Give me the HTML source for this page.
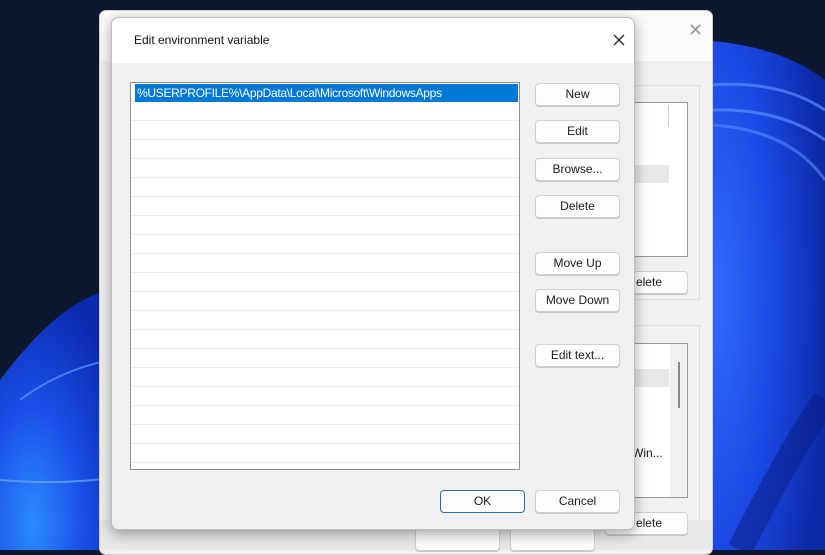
<!DOCTYPE html>
<html><head><style>
*{margin:0;padding:0;box-sizing:border-box}
body{width:825px;height:550px;overflow:hidden;position:relative;background:#0c1830;font-family:"Liberation Sans",sans-serif;font-size:12px;color:#111}
.abs{position:absolute}
.btn{position:absolute;width:85px;height:23px;background:#fdfdfd;border:1px solid #d0d0d0;border-radius:4px;text-align:center;line-height:21px;font-size:12px;color:#1a1a1a;box-shadow:0 1px 0 #c8c8c8}
</style></head><body>
<svg class="abs" style="left:0;top:0" width="825" height="550">
<defs>
<radialGradient id="g1" cx="0.3" cy="0.9" r="0.9"><stop offset="0" stop-color="#2a8cff"/><stop offset="0.5" stop-color="#1b4fe8"/><stop offset="1" stop-color="#0b2ab0"/></radialGradient>
<radialGradient id="g2" cx="0.1" cy="0.5" r="0.9"><stop offset="0" stop-color="#2f6cff"/><stop offset="0.6" stop-color="#1a46e0"/><stop offset="1" stop-color="#0c2aa8"/></radialGradient>
</defs>
<rect width="825" height="550" fill="#0c1830"/>
<path d="M0 380 Q60 300 110 290 L110 550 L0 550Z" fill="url(#g1)"/>
<path d="M20 400 Q60 370 110 360" stroke="#6aa8ff" stroke-width="2" fill="none" opacity=".6"/>
<path d="M0 480 Q60 485 110 478" stroke="#7ab4ff" stroke-width="2" fill="none" opacity=".6"/>
<path d="M700 40 Q780 45 825 80 L825 550 L700 550Z" fill="url(#g2)"/>
<path d="M712 85 Q780 80 825 110" stroke="#5a8bff" stroke-width="3" fill="none" opacity=".7"/>
<path d="M712 110 Q780 108 825 140" stroke="#5a8bff" stroke-width="3" fill="none" opacity=".7"/>
<path d="M712 125 Q790 130 825 180" stroke="#5a8bff" stroke-width="3" fill="none" opacity=".6"/>
<path d="M740 550 Q790 450 825 400" stroke="#0a1a80" stroke-width="25" fill="none" opacity=".5"/>
</svg>
<div class="abs" style="left:99px;top:10px;width:614px;height:545px;background:#f0f0f0;border-radius:7px;border:1px solid #cfcfcf"></div>
<div class="abs" style="left:100px;top:11px;width:612px;height:50px;background:#fbfbfb;border-radius:7px 7px 0 0"></div>
<div class="abs" style="left:688px;top:20px;font-size:18px;color:#999">✕</div>
<div class="abs" style="left:600px;top:85px;width:100px;height:215px;border:1px solid #dcdcdc"></div>
<div class="abs" style="left:600px;top:102px;width:88px;height:155px;background:#fff;border:1px solid #999"></div>
<div class="abs" style="left:600px;top:165px;width:69px;height:18px;background:#e8e8e8"></div>
<div class="abs" style="left:668px;top:105px;width:1px;height:22px;background:#ccc"></div>
<div class="btn" style="left:600px;top:271px;width:88px;text-align:right;padding-right:25px">elete</div>
<div class="abs" style="left:600px;top:325px;width:100px;height:220px;border:1px solid #dcdcdc"></div>
<div class="abs" style="left:600px;top:343px;width:88px;height:155px;background:#fff;border:1px solid #999"></div>
<div class="abs" style="left:600px;top:369px;width:69px;height:18px;background:#e8e8e8"></div>
<div class="abs" style="left:670px;top:344px;width:17px;height:153px;background:#f0f0f0"></div>
<div class="abs" style="left:678px;top:362px;width:2px;height:46px;background:#888"></div>
<div class="abs" style="left:632px;top:446px">Win...</div>
<div class="abs" style="left:100px;top:520px;width:612px;height:30px;background:#e8e8e8"></div>
<div class="btn" style="left:415px;top:528px"></div><div class="btn" style="left:510px;top:528px"></div><div class="btn" style="left:605px;top:512px;width:83px;text-align:right;padding-right:25px">elete</div>
<div class="abs" style="left:111px;top:17px;width:524px;height:513px;background:#f0f0f0;border:1px solid #bdbdbd;border-radius:7px;box-shadow:0 4px 14px rgba(0,0,0,.35)"></div>
<div class="abs" style="left:112px;top:18px;width:522px;height:45px;background:#fff;border-radius:7px 7px 0 0"></div>
<div class="abs" style="left:134px;top:33px">Edit environment variable</div>
<svg class="abs" style="left:613px;top:34px" width="12" height="12"><path d="M1 1L11 11M11 1L1 11" stroke="#222" stroke-width="1.3"/></svg>
<div class="abs" style="left:130px;top:82px;width:390px;height:388px;background:#fff;border:1px solid #8e8e8e;
background-image:repeating-linear-gradient(#fff 0 18px,#ececec 18px 19px)"></div>
<div class="abs" style="left:135px;top:84px;width:383px;height:18px;background:#0078d7;color:#fff;line-height:18px;padding-left:2px;letter-spacing:-0.3px">%USERPROFILE%\AppData\Local\Microsoft\WindowsApps</div>
<div class="btn" style="left:535px;top:83px">New</div>
<div class="btn" style="left:535px;top:120px">Edit</div>
<div class="btn" style="left:535px;top:158px">Browse...</div>
<div class="btn" style="left:535px;top:195px">Delete</div>
<div class="btn" style="left:535px;top:252px">Move Up</div>
<div class="btn" style="left:535px;top:289px">Move Down</div>
<div class="btn" style="left:535px;top:344px">Edit text...</div>
<div class="btn" style="left:440px;top:490px;border:1px solid #2b6e9e;box-shadow:none">OK</div>
<div class="btn" style="left:535px;top:490px">Cancel</div>
</body></html>
